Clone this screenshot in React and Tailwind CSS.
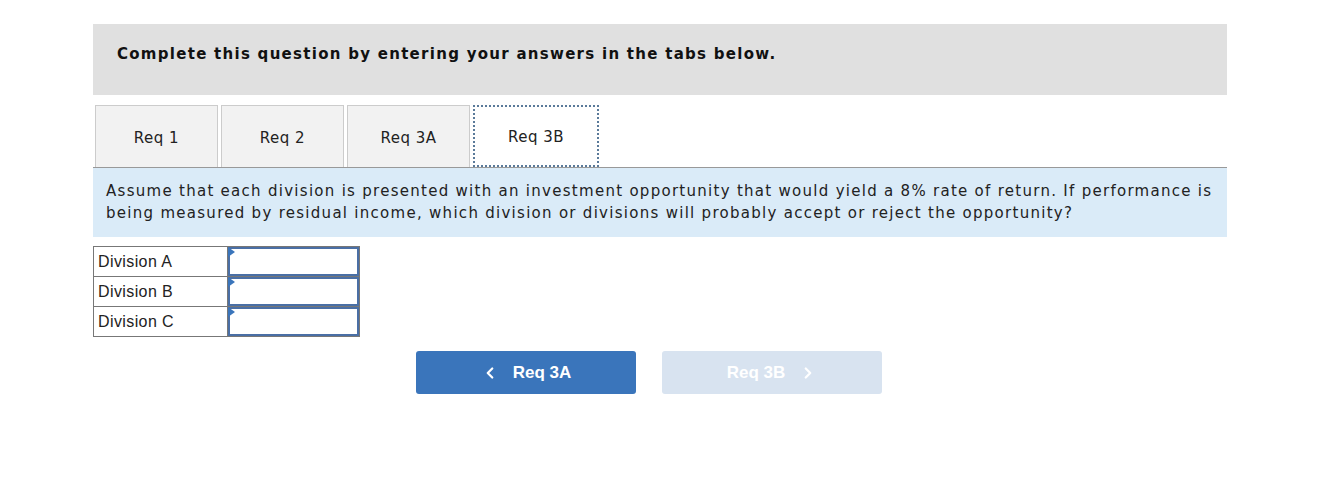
import React from 'react';
import { ChevronLeft, ChevronRight } from 'lucide-react';

const TABS = ['Req 1', 'Req 2', 'Req 3A', 'Req 3B'];
const ROWS = ['Division A', 'Division B', 'Division C'];

export default function App() {
    return (
        <div className="w-[1344px] h-[485px] bg-white pt-[24px] pl-[93px]">
            <div className="w-[1134px]">
                {/* header */}
                <div className="h-[71px] bg-[#e0e0e0] pl-[24px] pt-[19px]">
                    <p className="text-[15px] font-bold text-[#111] font-['DejaVu_Sans',sans-serif] tracking-[1.28px]">
                        Complete this question by entering your answers in the tabs below.
                    </p>
                </div>

                {/* tabs */}
                <div className="flex mt-[10px] pl-[2px] gap-[3px] border-b border-[#999]">
                    {TABS.map((t, i) => {
                        const active = i === TABS.length - 1;
                        return (
                            <div
                                key={t}
                                className={`h-[62px] pt-[3px] flex items-center justify-center text-[15px] tracking-[0.5px] text-[#222] font-['DejaVu_Sans',sans-serif] ${active
                                    ? 'w-[126px] bg-white border-2 border-dotted border-[#5a7a9a] -mb-px'
                                    : 'w-[123px] bg-[#f2f2f2] border border-b-0 border-[#ccc]'
                                    }`}
                            >
                                {t}
                            </div>
                        );
                    })}
                </div>

                {/* question */}
                <div className="bg-[#daebf8] h-[69px] pl-[13px] pr-[6px] pt-[12px] text-[15px] leading-[22px] tracking-[1.28px] text-[#222] font-['DejaVu_Sans',sans-serif]">
                    Assume that each division is presented with an investment opportunity that would yield a 8% rate of return. If performance is being measured by residual income, which division or divisions will probably accept or reject the opportunity?
                </div>

                {/* answer table */}
                <table className="mt-[9px] border-collapse font-['Liberation_Sans',Arial,sans-serif] text-[16px] tracking-[0.4px] text-[#222]">
                    <tbody>
                        {ROWS.map((r) => (
                            <tr key={r}>
                                <td className="w-[134px] h-[30px] border border-[#777] pl-[4px] align-middle">{r}</td>
                                <td className="w-[132px] h-[30px] border border-[#777] p-0 relative">
                                    <div className="absolute inset-0 border-2 border-[#4a6fa5] bg-white" />
                                    <div className="absolute left-0 top-0 w-0 h-0 border-t-[5px] border-b-[5px] border-l-[7px] border-t-transparent border-b-transparent border-l-[#3a75bb]" />
                                </td>
                            </tr>
                        ))}
                    </tbody>
                </table>

                {/* nav buttons */}
                <div className="flex mt-[14px] pl-[323px] gap-[26px] font-['Liberation_Sans',Arial,sans-serif]">
                    <button className="w-[220px] h-[43px] rounded-[3px] bg-[#3a75bb] text-white font-bold text-[17px] flex items-center justify-center gap-[14px]">
                        <ChevronLeft size={18} strokeWidth={3} />
                        <span>Req 3A</span>
                    </button>
                    <button className="w-[220px] h-[43px] rounded-[3px] bg-[#d8e3f0] text-white font-bold text-[17px] flex items-center justify-center gap-[14px]">
                        <span>Req 3B</span>
                        <ChevronRight size={18} strokeWidth={3} />
                    </button>
                </div>
            </div>
        </div>
    );
}
